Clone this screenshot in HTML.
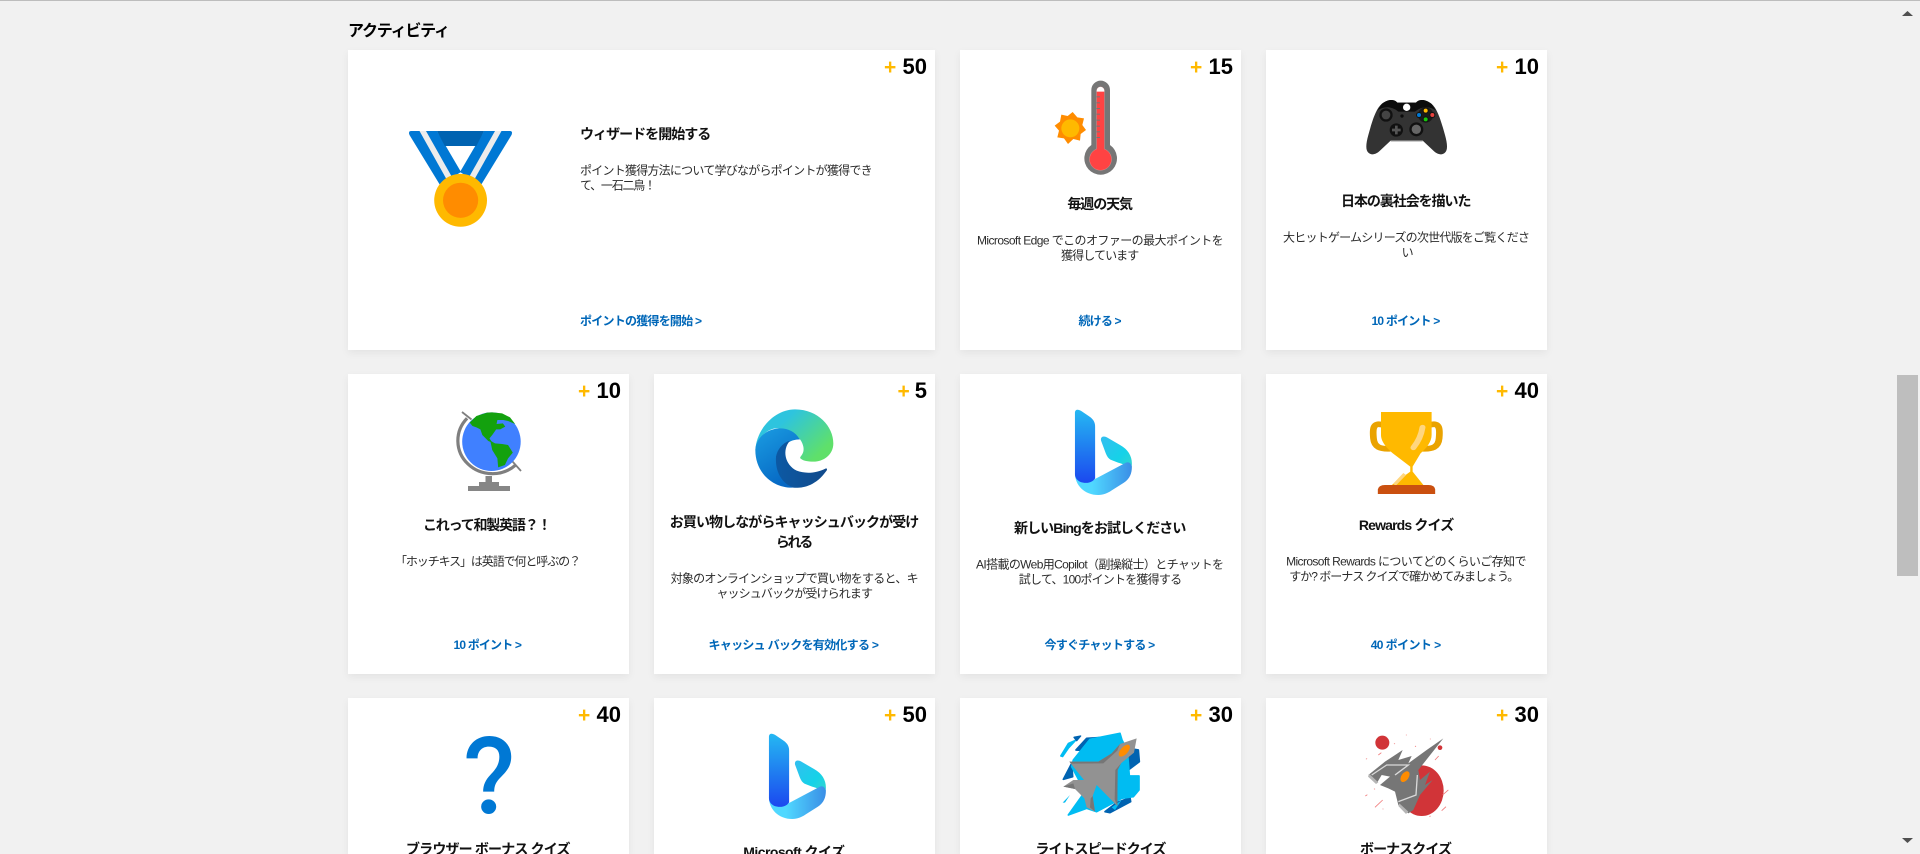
<!DOCTYPE html>
<html lang="ja"><head><meta charset="utf-8"><title>アクティビティ</title>
<style>
html,body{margin:0;padding:0;width:1920px;height:854px;overflow:hidden;background:#f1f1f1}
#w{position:relative;width:1920px;height:854px;overflow:hidden}
.c{position:absolute;background:#fff;box-shadow:0 3px 8px rgba(0,0,0,.06)}
svg{position:absolute;left:0;top:0}
text{font-family:"Liberation Sans","Noto Sans CJK JP",sans-serif}
.h{font-size:16px;font-weight:700;fill:#000}
.t{font-size:14px;font-weight:700;fill:#111}
.d{font-size:12px;fill:#2b2b2b}
.l{font-size:12px;font-weight:700;fill:#0067b8}
.n{font-size:22px;font-weight:700;fill:#000;text-anchor:end}
.p{font-size:21px;font-weight:700;fill:#ffb900}
</style></head><body>
<div id="w">
<div style="position:absolute;left:0;top:0;width:1920px;height:1px;background:#bdbdbd"></div>
<div class="c" style="left:348px;top:50px;width:587px;height:300px"></div>
<div class="c" style="left:960px;top:50px;width:281px;height:300px"></div>
<div class="c" style="left:1266px;top:50px;width:281px;height:300px"></div>
<div class="c" style="left:348px;top:374px;width:281px;height:300px"></div>
<div class="c" style="left:654px;top:374px;width:281px;height:300px"></div>
<div class="c" style="left:960px;top:374px;width:281px;height:300px"></div>
<div class="c" style="left:1266px;top:374px;width:281px;height:300px"></div>
<div class="c" style="left:348px;top:698px;width:281px;height:156px"></div>
<div class="c" style="left:654px;top:698px;width:281px;height:156px"></div>
<div class="c" style="left:960px;top:698px;width:281px;height:156px"></div>
<div class="c" style="left:1266px;top:698px;width:281px;height:156px"></div>
<svg width="1920" height="854" viewBox="0 0 1920 854" xmlns="http://www.w3.org/2000/svg">
<defs>
<linearGradient id="bb" x1="0" y1="0" x2="0" y2="1"><stop offset="0" stop-color="#25b8f2"/><stop offset="1" stop-color="#1b48ef"/></linearGradient>
<linearGradient id="bl" x1="0" y1="0" x2="1" y2="0"><stop offset=".3" stop-color="#50d8ff"/><stop offset="1" stop-color="#3a8ee6"/></linearGradient>
<linearGradient id="br" x1="0" y1="0" x2="1" y2="1"><stop offset="0" stop-color="#33bef0"/><stop offset=".6" stop-color="#15d2e8"/><stop offset="1" stop-color="#3bd5c8"/></linearGradient>
<linearGradient id="e1" x1="0" y1="0" x2="1" y2="0"><stop offset="0" stop-color="#0c59a4"/><stop offset="1" stop-color="#114a8b"/></linearGradient>
<linearGradient id="e2" x1="0" y1="0" x2=".5" y2="1"><stop offset="0" stop-color="#1b9de2"/><stop offset="1" stop-color="#0668c4"/></linearGradient>
<linearGradient id="e3" x1="0" y1="0" x2="1" y2=".7"><stop offset=".35" stop-color="#2ec4de"/><stop offset=".95" stop-color="#5fe06a"/></linearGradient>
<g id="bing">
<path d="M382 212C380 200 388 196 398 203L430 225C450 238 460 258 460 280C460 290 458 300 455 305C450 290 440 282 425 278L408 270C400 266 397 258 394 250Z" fill="url(#br)"/>
<path d="M316 310C316 345 340 375 375 375C388 375 398 370 408 362L440 338C455 326 460 310 460 290C458 280 452 274 445 278L365 328C350 342 325 345 316 310Z" fill="url(#bl)"/>
<path d="M316 128C316 118 324 117 332 123L352 139C362 147 367 156 367 170V325C360 338 345 342 330 336C320 330 316 322 316 312Z" fill="url(#bb)"/>
</g>
</defs>

<text class="h" x="348" y="36" textLength="102">アクティビティ</text>

<!-- points -->
<g>
<text class="n" x="927" y="74">50</text><text class="p" x="884" y="74">+</text>
<text class="n" x="1233" y="74">15</text><text class="p" x="1190" y="74">+</text>
<text class="n" x="1539" y="74">10</text><text class="p" x="1496" y="74">+</text>
<text class="n" x="621" y="398">10</text><text class="p" x="578" y="398">+</text>
<text class="n" x="927" y="398">5</text><text class="p" x="897.500" y="398">+</text>
<text class="n" x="1539" y="398">40</text><text class="p" x="1496" y="398">+</text>
<text class="n" x="621" y="722">40</text><text class="p" x="578" y="722">+</text>
<text class="n" x="927" y="722">50</text><text class="p" x="884" y="722">+</text>
<text class="n" x="1233" y="722">30</text><text class="p" x="1190" y="722">+</text>
<text class="n" x="1539" y="722">30</text><text class="p" x="1496" y="722">+</text>
</g>

<!-- texts -->
<text class="t" x="580" y="139" textLength="131.3">ウィザードを開始する</text>
<text class="d" x="580" y="174.5" textLength="292.6">ポイント獲得方法について学びながらポイントが獲得でき</text>
<text class="d" x="580" y="189.5" textLength="76">て、一石二鳥！</text>
<text class="l" x="580" y="325" textLength="122">ポイントの獲得を開始 &gt;</text>

<text class="t" x="1067.4" y="209" textLength="65.6">毎週の天気</text>
<text class="d" x="977" y="244.5" textLength="246.7">Microsoft Edge でこのオファーの最大ポイントを</text>
<text class="d" x="1061" y="259.5" textLength="78.3">獲得しています</text>
<text class="l" x="1078.5" y="325" textLength="43">続ける &gt;</text>

<text class="t" x="1341" y="206" textLength="130.5">日本の裏社会を描いた</text>
<text class="d" x="1283" y="241.5" textLength="247">大ヒットゲームシリーズの次世代版をご覧くださ</text>
<text class="d" x="1401.6" y="256.5">い</text>
<text class="l" x="1371.5" y="325" textLength="68.8">10 ポイント &gt;</text>

<text class="t" x="423" y="530" textLength="128.5">これって和製英語？！</text>
<text class="d" x="395" y="565.5" textLength="186">「ホッチキス」は英語で何と呼ぶの？</text>
<text class="l" x="453.5" y="649" textLength="68.4">10 ポイント &gt;</text>

<text class="t" x="669.8" y="527" textLength="249.5">お買い物しながらキャッシュバックが受け</text>
<text class="t" x="775.7" y="547" textLength="37.6">られる</text>
<text class="d" x="670.6" y="582.5" textLength="248">対象のオンラインショップで買い物をすると、キ</text>
<text class="d" x="716.4" y="597.5" textLength="156.6">ャッシュバックが受けられます</text>
<text class="l" x="708.5" y="649" textLength="170.4">キャッシュ バックを有効化する &gt;</text>

<text class="t" x="1014" y="533" textLength="172.4">新しいBingをお試しください</text>
<text class="d" x="976" y="568.5" textLength="248">AI搭載のWeb用Copilot（副操縦士）とチャットを</text>
<text class="d" x="1018.8" y="583.5" textLength="163.3">試して、100ポイントを獲得する</text>
<text class="l" x="1044.5" y="649" textLength="110.7">今すぐチャットする &gt;</text>

<text class="t" x="1358.9" y="530" textLength="95.3">Rewards クイズ</text>
<text class="d" x="1286.1" y="565.5" textLength="240.4">Microsoft Rewards についてどのくらいご存知で</text>
<text class="d" x="1289.3" y="580.5" textLength="230">すか? ボーナス クイズで確かめてみましょう。</text>
<text class="l" x="1370.7" y="649" textLength="70.4">40 ポイント &gt;</text>

<text class="t" x="406" y="854" textLength="164.5">ブラウザー ボーナス クイズ</text>
<text class="t" x="743.3" y="857" textLength="101.7">Microsoft クイズ</text>
<text class="t" x="1035.4" y="854" textLength="131">ライトスピードクイズ</text>
<text class="t" x="1360" y="854" textLength="92">ボーナスクイズ</text>

<!-- medal -->
<path d="M411 131H437L461 172L440 185L409.500 135Q408 131 411 131Z" fill="#0078d4"/>
<path d="M510 131H484L460 172L481 185L511.500 135Q513 131 510 131Z" fill="#0078d4"/>
<path d="M437 131H484L476.400 146H444.800Z" fill="#0063b1"/>
<path d="M419.500 131H426L452.500 178L447.500 181Z" fill="#ececec"/>
<path d="M501.500 131H495L468.500 178L473.500 181Z" fill="#ececec"/>
<circle cx="460.6" cy="200.3" r="26.4" fill="#ffb900"/>
<circle cx="460.6" cy="200.3" r="17.6" fill="#ff8c00"/>

<!-- thermometer -->
<g transform="translate(1040 70) scale(.33333)">
<path d="M154 60a28 28 0 0 1 56 0V225a49 49 0 1 1-56 0Z" fill="#767676"/>
<path d="M170 62a11.500 11.500 0 0 1 23 0V237a33 33 0 1 1-23 0Z" fill="#ff4343" stroke="#f3a0a0" stroke-width="1"/>
<path d="M170 65v-3a11.500 11.500 0 0 1 23 0v3Z" fill="#fff"/>
<g fill="#767676"><rect x="170" y="79" width="10" height="3"/><rect x="170" y="97" width="10" height="3"/><rect x="170" y="114" width="10" height="3"/><rect x="170" y="131" width="10" height="3"/><rect x="170" y="149" width="10" height="3"/><rect x="170" y="167" width="10" height="3"/><rect x="170" y="184" width="10" height="3"/><rect x="170" y="201" width="10" height="3"/></g>
<path d="M98 126L112 142L132 145L127 165L138 180L122 192L120 212L100 207L84 222L72 205L52 202L57 182L44 167L60 155L64 134L83 138Z" fill="#ff8c00"/>
<circle cx="91" cy="175" r="27" fill="#ffb900"/>
</g>

<!-- controller -->
<g transform="translate(1340 80) scale(.33333)">
<path d="M125 72C145 55 165 58 172 68L228 68C235 58 255 55 275 72C290 85 300 110 315 165C322 190 324 210 315 218C305 228 290 222 280 212L248 182L152 182L120 212C110 222 95 228 85 218C76 210 78 190 85 165C100 110 110 85 125 72Z" fill="#333"/>
<path d="M152 180H248V184H152Z" fill="#777"/>
<path d="M125 72C145 55 165 58 172 68L228 68C235 58 255 55 275 72L288 92C270 78 245 78 225 95L175 95C155 78 130 78 112 92Z" fill="#0c0c0c"/>
<circle cx="138" cy="105" r="20" fill="#111"/><circle cx="138" cy="105" r="13" fill="#444"/>
<circle cx="229" cy="148" r="21" fill="#111"/><circle cx="229" cy="148" r="14" fill="#666"/>
<circle cx="169" cy="150" r="20" fill="#111"/><path d="M165 137h8v9h9v8h-9v9h-8v-9h-9v-8h9Z" fill="#555"/>
<circle cx="200" cy="82" r="11" fill="#fff"/><circle cx="186" cy="108" r="5" fill="#0c0c0c"/>
<circle cx="257" cy="105" r="23" fill="#1a1a1a"/>
<circle cx="257" cy="92" r="9" fill="#111"/><circle cx="257" cy="92" r="6" fill="#ffb900"/>
<circle cx="237" cy="105" r="9" fill="#111"/><circle cx="237" cy="105" r="6" fill="#0078d4"/>
<circle cx="277" cy="105" r="9" fill="#111"/><circle cx="277" cy="105" r="6" fill="#e8433f"/>
<circle cx="257" cy="118" r="9" fill="#111"/><circle cx="257" cy="118" r="6" fill="#16c60c"/>
</g>

<!-- globe -->
<path d="M467.100 418.200A34.500 33 0 0 0 515.900 464.800" fill="none" stroke="#7f7f7f" stroke-width="3.200"/>
<path d="M462 412L471.500 419.500M521 471L512.500 461.500" fill="none" stroke="#7f7f7f" stroke-width="1.800"/>
<rect x="485.500" y="476" width="6.500" height="6" fill="#868686"/><rect x="479" y="482" width="20" height="5" fill="#868686"/><rect x="468" y="486" width="42" height="5" fill="#868686"/>
<g transform="translate(340 370) scale(.39541 .33333)">
<ellipse cx="383" cy="215" rx="74" ry="88" fill="#4080ff"/>
<path d="M328 158L345 138L372 128L385 127L410 130L430 142L443 162L425 153L413 150L398 150L396 162L412 160L418 170L405 178L395 178L385 195L378 205L385 218L375 213L360 195L355 178L345 172L335 168Z" fill="#13a10e"/>
<path d="M380 212L392 220L410 222L425 225L437 248L425 265L417 285L400 292L398 265L385 240Z" fill="#13a10e"/>
</g>

<!-- edge -->
<g transform="translate(740 400) scale(.33333)">
<path d="M46 150C50 85 105 28 165 28C235 28 280 80 280 130C280 165 250 185 220 185C205 185 190 183 182 176C175 170 195 165 190 140C185 110 150 88 115 85C85 83 55 110 46 150Z" fill="url(#e3)"/>
<path d="M46 150C48 110 85 85 120 85C145 85 165 95 180 118C150 118 125 135 115 165C105 200 115 240 160 263C100 265 46 220 46 150Z" fill="url(#e2)"/>
<path d="M108 170C112 150 125 130 150 122C125 150 135 195 170 212C195 222 230 220 258 205C262 205 262 210 258 214C225 260 185 265 160 263C125 250 105 215 108 170Z" fill="url(#e1)"/>
</g>

<!-- bing -->
<g transform="translate(950 370) scale(.39541 .33333)"><use href="#bing"/></g>
<g transform="translate(644 694) scale(.39541 .33333)"><use href="#bing"/></g>

<!-- trophy -->
<g transform="translate(950 370) scale(.39541 .33333)">
<path d="M1095 165C1068 155 1069 180 1071 205C1073 232 1088 238 1115 236M1213 165C1240 155 1239 180 1237 205C1235 232 1220 238 1193 236" fill="none" stroke="#eaa300" stroke-width="17"/>
<path d="M1090 126H1218V195C1218 215 1205 235 1190 250L1170 290V305L1198 346H1116L1164 305V290L1120 250C1105 235 1090 215 1090 195Z" fill="#ffb900"/>
<path d="M1195 172C1192 195 1182 218 1172 233" fill="none" stroke="#ffd67f" stroke-width="15" stroke-linecap="round"/>
<path d="M1150 312L1124 344" fill="none" stroke="#ffd67f" stroke-width="9"/>
<path d="M1082 372V358Q1085 345 1100 345H1210Q1225 345 1227 358V372Z" fill="#ca5010"/>
</g>

<!-- question -->
<g transform="translate(340 690) scale(.39541 .33333)" fill="#0078d4">
<path d="M320 205C320 165 345 138 378 138C412 138 433 165 433 200C433 235 415 250 400 270C392 282 390 292 390 305H362C362 285 368 270 380 255C392 240 403 225 403 200C403 180 393 170 376 170C360 170 348 183 348 205Z"/>
<ellipse cx="376" cy="350" rx="19" ry="22"/>
</g>

<!-- jet -->
<g transform="translate(1040 720) scale(.33333)">
<path d="M62 108L85 70L108 60L85 85L68 110Z" fill="#00bcf2" stroke="#00bcf2" stroke-width="4" stroke-linejoin="round"/>
<path d="M102 52L122 48L110 62Z" fill="#0063b1" stroke="#0063b1" stroke-width="4" stroke-linejoin="round"/>
<path d="M108 90L140 55L190 52L205 95ZM265 85L295 90L298 125L265 150ZM70 178L95 130L98 170ZM195 275L230 248L270 233L272 245L210 278Z" fill="#0063b1" stroke="#0063b1" stroke-width="5" stroke-linejoin="round"/>
<path d="M150 58L240 40L246 60L262 90L268 168L297 168L297 210L280 230L245 235L170 275L140 265L85 285L135 215L95 140L100 120Z" fill="#00bcf2" stroke="#00bcf2" stroke-width="5" stroke-linejoin="round"/>
<path d="M68 248L90 225L75 248ZM215 262L245 240L225 270Z" fill="#00bcf2"/>
<path d="M290 55L282 98L243 130L233 150L232 258L170 195L158 228L165 275L140 262L133 235L105 207L70 200L100 180L132 180L88 125L175 125L215 100L240 72Z" fill="#929292"/>
<path d="M232 258L224 238L226 150L243 130L233 150ZM165 275L150 262L152 235L158 228ZM105 207L70 200L100 190ZM175 125L215 100L240 72L232 92L190 130L94 131L88 125Z" fill="#767676"/>
<ellipse cx="253" cy="92" rx="22" ry="11" transform="rotate(-48 253 92)" fill="#ff8c00"/>
</g>

<!-- ship -->
<g transform="translate(1340 720) scale(.33333)">
<circle cx="127" cy="68" r="21" fill="#d13438"/><circle cx="300" cy="83" r="7" fill="#d13438"/>
<ellipse cx="245" cy="212" rx="66" ry="76" fill="#d13438"/>
<path d="M76 228L82 224M105 262L128 240M115 105L124 98M285 120L296 108M308 225L325 210M305 272L318 260M225 80L228 78" stroke="#f07a7a" stroke-width="2.500" fill="none"/>
<path d="M78 118L81 115M198 46L200 44M270 58L272 56M162 72L165 70M102 208L105 206M268 290L272 288M128 268L130 266" stroke="#f3a0a0" stroke-width="3" fill="none"/>
<path d="M310 55L235 150L240 180L270 155L255 195L278 180L240 225L220 270L205 280L175 255L165 215L145 205L120 195L150 170L125 165L110 190L85 165L135 125L188 90L175 120L215 108L205 130L260 90Z" fill="#767676"/>
<path d="M95 165L140 135H205L165 165M232 165L228 225L175 245" fill="none" stroke="#d9d9d9" stroke-width="4"/>
<path d="M88 162L115 187L108 192L84 170ZM178 250L205 275L198 282L175 258Z" fill="#b5b5b5"/>
<ellipse cx="195" cy="170" rx="18" ry="11" transform="rotate(-55 195 170)" fill="#ff8c00"/>
</g>

<!-- scrollbar -->
<rect x="1897" y="375" width="21" height="201" fill="#bebebe"/>
<path d="M1902 16L1907.500 11L1913 16Z" fill="#505050"/>
<path d="M1902 838L1907.500 843L1913 838Z" fill="#505050"/>
</svg>
</div>
</body></html>
